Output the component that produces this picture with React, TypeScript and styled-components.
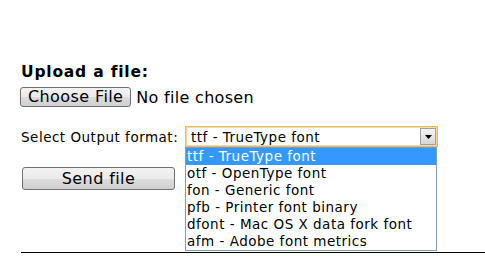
import styled, { createGlobalStyle } from "styled-components";

const GlobalStyle = createGlobalStyle`
    html, body {
        margin: 0;
        padding: 0;
        background: #ffffff;
        overflow: hidden;
    }
    body {
        font-family: "DejaVu Sans", Verdana, sans-serif;
        color: #000000;
    }
`;

const Page = styled.div`
    width: 485px;
    height: 259px;
    padding: 63px 0 0 20px;
    box-sizing: border-box;
    display: flex;
    flex-direction: column;
`;

const Heading = styled.div`
    font-size: 15.5px;
    font-weight: bold;
    letter-spacing: 0.8px;
    line-height: 19px;
    padding-left: 1px;
`;

const FileRow = styled.div`
    display: flex;
    align-items: center;
    gap: 5px;
    margin-top: 5px;
    font-size: 16px;
    letter-spacing: 0.3px;
`;

const Button = styled.button<{ $width?: number }>`
    font-family: "DejaVu Sans", Verdana, sans-serif;
    font-size: 16px;
    letter-spacing: 0.4px;
    color: #000000;
    height: ${(p) => (p.$width ? 23 : 20)}px;
    width: ${(p) => (p.$width ? `${p.$width}px` : "auto")};
    padding: 0 7px;
    line-height: 18px;
    border: 1px solid #707070;
    border-radius: 3px;
    background: linear-gradient(#f2f2f2 0%, #ebebeb 50%, #dddddd 51%, #cfcfcf 100%);
    display: flex;
    align-items: center;
    justify-content: center;
`;

const SelectRow = styled.div`
    display: flex;
    align-items: center;
    margin-top: 19px;
    font-size: 13.5px;
    letter-spacing: 0.5px;
    padding-left: 1px;
`;

const Label = styled.span`
    width: 164px;
`;

const SelectWrap = styled.div`
    position: relative;
`;

const SelectBox = styled.div`
    width: 253px;
    height: 21px;
    box-sizing: border-box;
    border: 1px solid #e3b96b;
    box-shadow: inset 0 0 0 1px #f3d9a3;
    display: flex;
    align-items: center;
    justify-content: space-between;
    padding: 0 1px 0 5px;
`;

const ArrowButton = styled.div`
    width: 16px;
    height: 17px;
    box-sizing: border-box;
    border: 1px solid #a0a0a0;
    background: linear-gradient(#f4f4f4, #d6d6d6);
    display: flex;
    align-items: center;
    justify-content: center;
`;

const List = styled.ul`
    position: absolute;
    left: 0;
    top: 21px;
    width: 252px;
    margin: 0;
    padding: 0;
    list-style: none;
    box-sizing: border-box;
    border: 1px solid #7f9db9;
    background: #ffffff;
`;

const Option = styled.li<{ $active?: boolean }>`
    height: 17px;
    line-height: 17px;
    padding-left: 1px;
    white-space: nowrap;
    background: ${(p) => (p.$active ? "#3399ff" : "transparent")};
    color: ${(p) => (p.$active ? "#ffffff" : "#000000")};
`;

const SendRow = styled.div`
    margin-top: 20px;
    padding-left: 2px;
`;

const Rule = styled.hr`
    margin: 62px 0 0 1px;
    width: 480px;
    border: none;
    border-top: 1px solid #000000;
`;

const options = [
    "ttf - TrueType font",
    "otf - OpenType font",
    "fon - Generic font",
    "pfb - Printer font binary",
    "dfont - Mac OS X data fork font",
    "afm - Adobe font metrics",
];

export default function App() {
    return (
        <>
            <GlobalStyle />
            <Page>
                <Heading>Upload a file:</Heading>
                <FileRow>
                    <Button>Choose File</Button>
                    <span>No file chosen</span>
                </FileRow>
                <SelectRow>
                    <Label>Select Output format:</Label>
                    <SelectWrap>
                        <SelectBox>
                            <span>{options[0]}</span>
                            <ArrowButton>
                                <svg width="7" height="4" viewBox="0 0 7 4">
                                    <path d="M0 0 L7 0 L3.5 4 Z" fill="#000" />
                                </svg>
                            </ArrowButton>
                        </SelectBox>
                        <List>
                            {options.map((o, i) => (
                                <Option key={o} $active={i === 0}>
                                    {o}
                                </Option>
                            ))}
                        </List>
                    </SelectWrap>
                </SelectRow>
                <SendRow>
                    <Button $width={153}>Send file</Button>
                </SendRow>
                <Rule />
            </Page>
        </>
    );
}
